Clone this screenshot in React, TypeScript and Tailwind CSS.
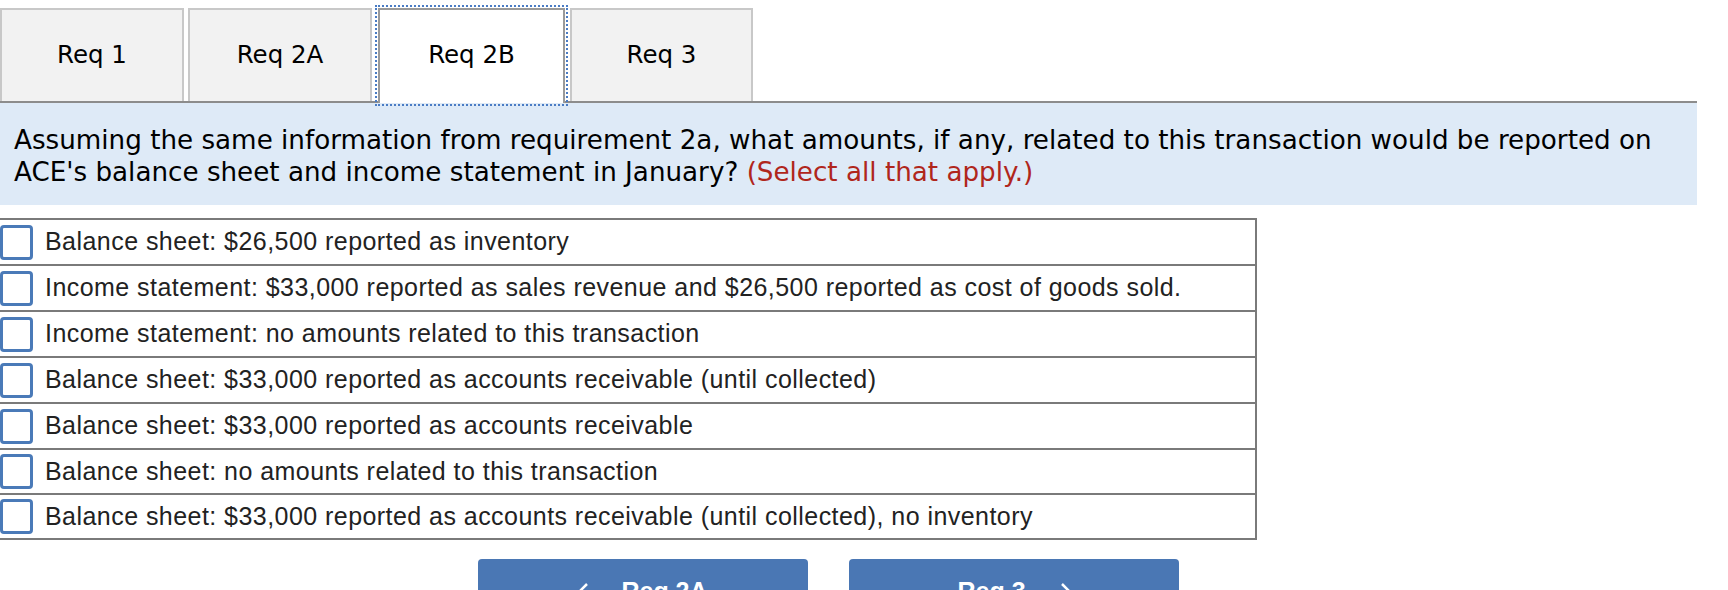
import React from "react";

const options = [
  "Balance sheet: $26,500 reported as inventory",
  "Income statement: $33,000 reported as sales revenue and $26,500 reported as cost of goods sold.",
  "Income statement: no amounts related to this transaction",
  "Balance sheet: $33,000 reported as accounts receivable (until collected)",
  "Balance sheet: $33,000 reported as accounts receivable",
  "Balance sheet: no amounts related to this transaction",
  "Balance sheet: $33,000 reported as accounts receivable (until collected), no inventory",
];

const tabFont = { fontFamily: '"DejaVu Sans", Verdana, sans-serif' };
const armFont = { fontFamily: '"Liberation Sans", Arial, sans-serif' };

export default function App() {
  return (
    <div className="w-[1728px] h-[590px] overflow-hidden bg-white">
      {/* Tabs */}
      <div
        className="flex items-end h-[103px] w-[1697px] border-b-2 border-[#8c8c8c]"
        style={tabFont}
      >
        <div className="w-[184px] h-[93px] box-border border-2 border-b-0 border-[#c8c8c8] bg-[#f2f2f2] flex items-center justify-center text-[24.5px] text-black">
          Req 1
        </div>
        <div className="ml-[4px] w-[184px] h-[93px] box-border border-2 border-b-0 border-[#c8c8c8] bg-[#f2f2f2] flex items-center justify-center text-[24.5px] text-black">
          Req 2A
        </div>
        <div className="relative z-10 ml-[6px] mb-[-2px] w-[187px] h-[95px] box-border border-2 border-b-0 border-[#9a9a9a] bg-white flex items-center justify-center text-[24.5px] text-black outline-2 outline-dotted outline-[#4a7cc4] outline-offset-1 pb-[2px]">
          Req 2B
        </div>
        <div className="ml-[5px] w-[183px] h-[93px] box-border border-2 border-b-0 border-[#c8c8c8] bg-[#f2f2f2] flex items-center justify-center text-[24.5px] text-black">
          Req 3
        </div>
      </div>

      {/* Question */}
      <div
        className="w-[1697px] h-[102px] bg-[#deeaf7] pl-[14px] pt-[21px] text-[26.2px] leading-[32px] text-black"
        style={tabFont}
      >
        <div className="whitespace-nowrap">
          Assuming the same information from requirement 2a, what amounts, if any, related to this transaction would be reported on
        </div>
        <div className="whitespace-nowrap">
          ACE's balance sheet and income statement in January?{" "}
          <span className="text-[#b0261c]">(Select all that apply.)</span>
        </div>
      </div>

      {/* Options */}
      <div className="mt-[13px] w-[1257px] border-t-2 border-r-2 border-[#7a7a7a]" style={armFont}>
        {options.map((o, i) => (
          <div
            key={i}
            className={`flex items-center box-border border-b-2 border-[#7a7a7a] ${i >= 5 ? "h-[45px]" : "h-[46px]"}`}
          >
            <div className="w-[33px] h-[35px] box-border border-[3px] border-[#4a7ab8] rounded-[4px] bg-white shrink-0" />
            <div className="ml-[12px] text-[25px] tracking-[0.45px] text-[#222222] whitespace-nowrap">{o}</div>
          </div>
        ))}
      </div>

      {/* Buttons */}
      <div className="flex mt-[19px] ml-[478px] gap-[41px]" style={armFont}>
        <div className="w-[330px] h-[66px] bg-[#4a77b4] rounded-[4px] flex items-center justify-center gap-[33px] text-white font-bold text-[25px]">
          <svg width="10" height="18" viewBox="0 0 10 18" fill="none" stroke="white" strokeWidth="2.5">
            <polyline points="9,1 1,9 9,17" />
          </svg>
          <span>Req 2A</span>
        </div>
        <div className="w-[330px] h-[66px] bg-[#4a77b4] rounded-[4px] flex items-center justify-center gap-[35px] text-white font-bold text-[25px]">
          <span>Req 3</span>
          <svg width="10" height="18" viewBox="0 0 10 18" fill="none" stroke="white" strokeWidth="2.5">
            <polyline points="1,1 9,9 1,17" />
          </svg>
        </div>
      </div>
    </div>
  );
}
